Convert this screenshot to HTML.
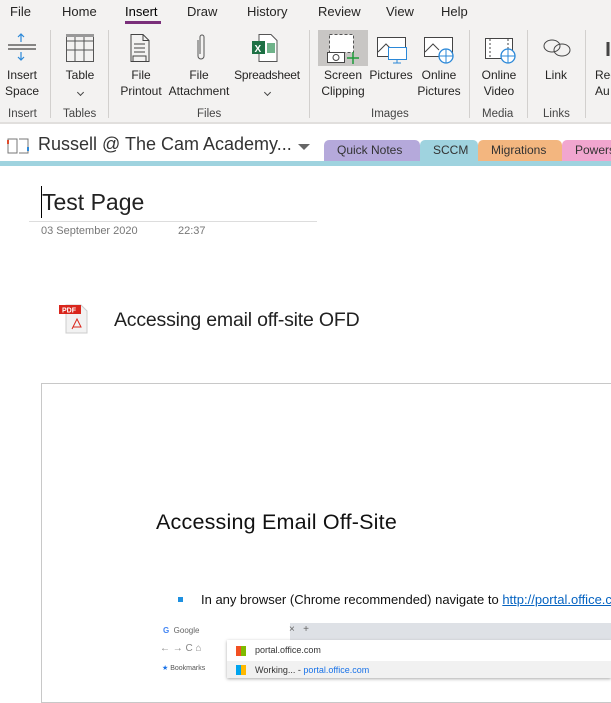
<!DOCTYPE html>
<html><head><style>
*{margin:0;padding:0;box-sizing:border-box}
body{width:611px;height:678px;overflow:hidden;background:#fff;font-family:"Liberation Sans",sans-serif;position:relative;color:#252423}
.a{position:absolute;white-space:nowrap}
.tab{font-size:13px;top:4px}
.lbl{font-size:12px;text-align:center;line-height:16px}
.grp{font-size:11.5px;top:108px;color:#444}
.sep{position:absolute;top:30px;width:1px;height:88px;background:#d2d0ce}
.nt{position:absolute;top:140px;height:21px;font-size:12px;line-height:21px;border-radius:5px 5px 0 0;padding-left:13px;color:#333}
.chev{display:inline-block;width:5px;height:5px;border-right:1px solid #444;border-bottom:1px solid #444;transform:rotate(45deg);margin-top:2px}
</style></head><body>
<div class="a" style="left:0;top:0;width:611px;height:123px;background:#f3f2f1"></div>
<div class="a" style="left:0;top:122px;width:611px;height:2px;background:#e1dfdd"></div>
<div class="a tab" style="left:10px">File</div>
<div class="a tab" style="left:62px">Home</div>
<div class="a tab" style="left:125px;color:#000">Insert</div>
<div class="a" style="left:125px;top:21px;width:36px;height:3px;background:#7a2f7a"></div>
<div class="a tab" style="left:187px">Draw</div>
<div class="a tab" style="left:247px">History</div>
<div class="a tab" style="left:318px">Review</div>
<div class="a tab" style="left:386px">View</div>
<div class="a tab" style="left:441px">Help</div>

<svg class="a" style="left:0;top:30px" width="611" height="36">
<g stroke="#2b88d8" fill="none" stroke-width="1.2"><path d="M21 4v8M18 7l3-3 3 3M21 22v8M18 27l3 3 3-3"/></g>
<path d="M8 15h28M8 19h28" stroke="#444" stroke-width="1.2"/>
<g stroke="#555" fill="none"><rect x="66.5" y="4.5" width="27" height="27"/><path d="M66 11h28M66 20h28M75 4v28M84 4v28" /></g>
<rect x="66" y="4" width="28" height="3" fill="#999"/>
<g stroke="#444" fill="none"><path d="M131 4.5h12l6 6v21h-18z M143 4.5v6h6 M134 14h11M134 18h11M134 22h11 M133 31v-5h13v5"/></g>
<path d="M198 10v16a3 3 0 0 0 6 0V7a2 2 0 0 0-4 0v17" stroke="#555" fill="none"/>
<path d="M259 4.5h12l6 6v21h-18z" stroke="#555" fill="#fff"/>
<rect x="252" y="11" width="13" height="13" fill="#1d7044"/><text x="254.5" y="22" font-size="10" fill="#fff" font-weight="bold" font-family="Liberation Sans">X</text>
<rect x="267" y="13" width="8" height="10" fill="#6fb38a"/>
<rect x="318" y="0" width="50" height="70" fill="#c8c6c4"/>
<rect x="329.5" y="4.5" width="24" height="18" stroke="#555" stroke-dasharray="3 2" fill="#fff"/>
<rect x="327.5" y="22.5" width="17" height="10" stroke="#444" fill="#fff"/><circle cx="336" cy="27.5" r="3" stroke="#444" fill="none"/>
<path d="M353 22v12M347 28h12" stroke="#1e9b3a" stroke-width="1.5"/>
<rect x="377.5" y="7.5" width="28" height="19" stroke="#444" fill="#fff"/><path d="M378 22l8-8 6 6" stroke="#444" fill="none"/>
<rect x="388.5" y="17.5" width="18" height="12" stroke="#2b88d8" fill="#fff"/><path d="M397 30v3M393 33h8" stroke="#2b88d8"/>
<rect x="424.5" y="7.5" width="28" height="19" stroke="#444" fill="#fff"/><path d="M425 22l8-8 6 6" stroke="#444" fill="none"/>
<circle cx="446" cy="26" r="7" fill="#fff" stroke="#2b88d8" stroke-width="1.3"/><path d="M439 26h14M446 19v14" stroke="#2b88d8"/>
<rect x="485.5" y="8.5" width="27" height="20" stroke="#444" fill="#fff"/><path d="M490 9v19M508 9v19" stroke="#444" stroke-dasharray="2 2"/>
<circle cx="508" cy="26" r="7" fill="#fff" stroke="#2b88d8" stroke-width="1.3"/><path d="M501 26h14M508 19v14" stroke="#2b88d8"/>
<ellipse cx="552" cy="16" rx="8" ry="6" stroke="#444" fill="none"/><ellipse cx="562" cy="20" rx="8" ry="6" stroke="#444" fill="none"/>
<path d="M608 12v14" stroke="#444" stroke-width="3"/>
</svg>
<div class="a lbl" style="left:0;top:67px;width:44px">Insert<br>Space</div>
<div class="a lbl" style="left:60px;top:67px;width:40px">Table<br><span class="chev"></span></div>
<div class="a lbl" style="left:115px;top:67px;width:52px">File<br>Printout</div>
<div class="a lbl" style="left:166px;top:67px;width:66px">File<br>Attachment</div>
<div class="a lbl" style="left:233px;top:67px;width:68px;letter-spacing:-0.2px">Spreadsheet<br><span class="chev"></span></div>
<div class="a lbl" style="left:318px;top:67px;width:50px">Screen<br>Clipping</div>
<div class="a lbl" style="left:368px;top:67px;width:46px">Pictures</div>
<div class="a lbl" style="left:414px;top:67px;width:50px">Online<br>Pictures</div>
<div class="a lbl" style="left:475px;top:67px;width:48px">Online<br>Video</div>
<div class="a lbl" style="left:536px;top:67px;width:40px">Link</div>
<div class="a lbl" style="left:595px;top:67px;width:30px;text-align:left">Rec<br>Au</div>
<div class="a grp" style="left:8px">Insert</div>
<div class="a grp" style="left:63px">Tables</div>
<div class="a grp" style="left:197px">Files</div>
<div class="a grp" style="left:371px">Images</div>
<div class="a grp" style="left:482px">Media</div>
<div class="a grp" style="left:543px">Links</div>
<div class="sep" style="left:50px"></div><div class="sep" style="left:108px"></div><div class="sep" style="left:309px"></div><div class="sep" style="left:469px"></div><div class="sep" style="left:527px"></div><div class="sep" style="left:585px"></div>

<svg class="a" style="left:7px;top:137px" width="24" height="20"><path d="M1 2h9v14H1zM12 2h9v14h-9" stroke="#777" fill="none"/><rect x="0" y="3" width="2" height="4" fill="#e04a2a"/><rect x="20" y="10" width="2" height="4" fill="#2b88d8"/></svg>
<div class="a" style="left:38px;top:134px;font-size:18px;color:#333">Russell @ The Cam Academy...</div>
<div class="a" style="left:298px;top:144px;border:6px solid transparent;border-top:6px solid #666"></div>
<div class="nt" style="left:324px;width:96px;background:#b5a9db">Quick Notes</div>
<div class="nt" style="left:420px;width:58px;background:#9fd3df">SCCM</div>
<div class="nt" style="left:478px;width:84px;background:#f3b67f">Migrations</div>
<div class="nt" style="left:562px;width:60px;background:#f1a6cf">Powers</div>
<div class="a" style="left:0;top:161px;width:611px;height:5px;background:#9fd3df"></div>

<div class="a" style="left:41px;top:186px;width:1px;height:32px;background:#000"></div>
<div class="a" style="left:42px;top:189px;font-size:23px;color:#222">Test Page</div>
<div class="a" style="left:29px;top:221px;width:288px;height:1px;background:#ddd"></div>
<div class="a" style="left:41px;top:225px;font-size:11px;color:#777">03 September 2020</div>
<div class="a" style="left:178px;top:225px;font-size:11px;color:#777">22:37</div>
<svg class="a" style="left:58px;top:302px" width="34" height="32"><path d="M8 3h15l6 6v22H8z" fill="#f2f2f2" stroke="#ccc"/><rect x="1" y="3" width="22" height="9" fill="#d9261c"/><text x="4" y="10.5" font-size="7" fill="#fff" font-weight="bold" font-family="Liberation Sans">PDF</text><path d="M14 27l5-10 4 8-8 0" stroke="#d9261c" fill="none"/></svg>
<div class="a" style="left:114px;top:309px;font-size:19.5px;color:#222;letter-spacing:-0.2px">Accessing email off-site OFD</div>
<div class="a" style="left:41px;top:383px;width:580px;height:320px;border:1px solid #c8c8c8"></div>
<div class="a" style="left:156px;top:510px;font-size:21.5px;color:#111;letter-spacing:0.2px">Accessing Email Off-Site</div>
<div class="a" style="left:178px;top:597px;width:5px;height:5px;background:#1e90e0"></div>
<div class="a" style="left:201px;top:592px;font-size:13px;color:#111">In any browser (Chrome recommended) navigate to <span style="color:#0563c1;text-decoration:underline">http://portal.office.com</span></div>
<div class="a" style="left:155px;top:622px;width:456px;height:56px;background:#fff"></div>
<div class="a" style="left:290px;top:623px;width:321px;height:17px;background:#dee1e6"></div>
<div class="a" style="left:163px;top:626px;font-size:8px;color:#666"><span style="color:#4285f4;font-weight:bold">G</span> &nbsp;Google</div>
<div class="a" style="left:289px;top:624px;font-size:10px;color:#666">× &nbsp; +</div>
<div class="a" style="left:160px;top:643px;font-size:10px;color:#888">← → C ⌂</div>
<div class="a" style="left:227px;top:640px;width:384px;height:38px;background:#fff;box-shadow:0 1px 3px #aaa"></div>
<div class="a" style="left:236px;top:646px;width:10px;height:10px;background:linear-gradient(90deg,#f25022 50%,#7fba00 50%)"></div>
<div class="a" style="left:255px;top:645px;font-size:9px;color:#333">portal.office.com</div>
<div class="a" style="left:227px;top:661px;width:384px;height:17px;background:#f1f1f1"></div>
<div class="a" style="left:236px;top:665px;width:10px;height:10px;background:linear-gradient(90deg,#00a4ef 50%,#ffb900 50%)"></div>
<div class="a" style="left:255px;top:665px;font-size:9px;color:#333">Working... - <span style="color:#1a73e8">portal.office.com</span></div>
<div class="a" style="left:162px;top:664px;font-size:7px;color:#555"><span style="color:#1a73e8">★</span> Bookmarks</div>
</body></html>
